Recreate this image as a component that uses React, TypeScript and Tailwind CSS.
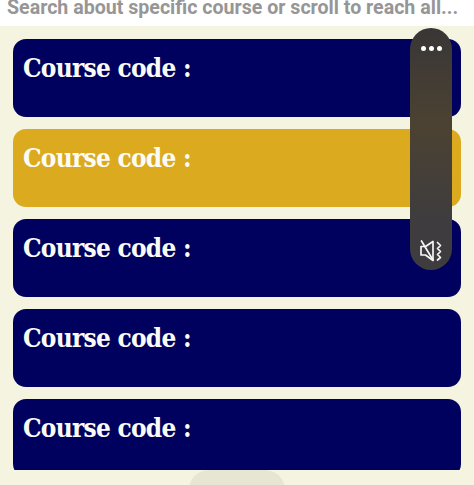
const cards = ["bg-[#00005f]", "bg-[#dcaa1e]", "bg-[#00005f]", "bg-[#00005f]", "bg-[#00005f]"];

export default function App() {
  return (
    <div className="relative flex h-[485px] w-[474px] flex-col overflow-hidden bg-white">
      <div className="h-[26px] shrink-0 overflow-hidden px-[7px]">
        <div className="-mt-[5px] whitespace-nowrap font-['Roboto',sans-serif] text-[19.6px] font-bold leading-[26px] text-[#969696]">
          Search about specific course or scroll to reach all...
        </div>
      </div>
      <div className="flex min-h-0 flex-1 flex-col bg-[#f4f4e0]">
        <div className="flex h-[444px] flex-col gap-[12px] overflow-hidden px-[13px] pt-[13px]">
          {cards.map((c, i) => (
            <div key={i} className={`h-[78px] shrink-0 rounded-[13px] px-[10px] pt-[11px] ${c}`}>
              <div className="font-['DejaVu_Serif',serif] text-[26px] font-bold leading-[36px] tracking-[-0.75px] text-[#fbfbf5] [font-stretch:condensed]">
                Course code :
              </div>
            </div>
          ))}
        </div>
        <div className="flex flex-1 justify-center overflow-hidden">
          <div className="h-[40px] w-[96px] rounded-full bg-[#e6e6d2]" />
        </div>
      </div>
      <div className="absolute left-[410px] top-[28px] flex h-[242px] w-[42px] flex-col items-center justify-between rounded-[21px] bg-gradient-to-b from-[#383636] from-0% via-[#4c4232] via-40% to-[#3e3c3e] to-80% pb-[8px] pt-[18px]">
        <div className="flex gap-[3px]">
          <span className="h-[5px] w-[5px] rounded-full bg-white" />
          <span className="h-[5px] w-[5px] rounded-full bg-white" />
          <span className="h-[5px] w-[5px] rounded-full bg-white" />
        </div>
        <svg width="22" height="22" viewBox="0 0 22 22" fill="none" stroke="#f5f5f5" strokeWidth="1.7" strokeLinejoin="round" strokeLinecap="round">
          <path d="M1 6.5H5.5L13 1.5V20.5L5.5 15H1Z" />
          <path d="M1.5 1L13 20" />
          <path d="M17.5 2.5L20.5 5.5L17.5 8.5L20.5 11.5L17.5 14.5L20.5 17.5L17.5 20" />
        </svg>
      </div>
    </div>
  );
}
